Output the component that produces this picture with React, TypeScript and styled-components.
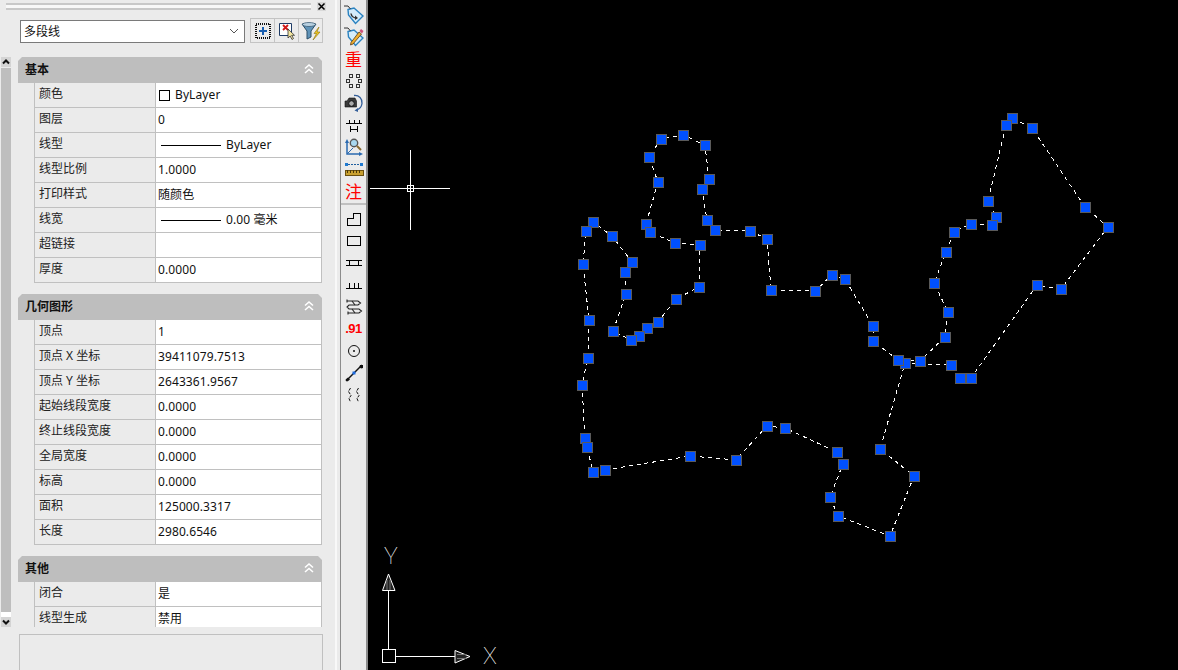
import React from 'react';
import styled, { createGlobalStyle } from 'styled-components';

const GlobalStyle = createGlobalStyle`
  html, body {
    margin: 0;
    padding: 0;
    background: #000;
  }
  * {
    box-sizing: border-box;
  }
`;

const Screen = styled.div`
  display: flex;
  width: 1178px;
  height: 670px;
  overflow: hidden;
  font-family: 'Noto Sans', 'Noto Sans CJK SC', sans-serif;
  font-size: 12px;
  color: #111;
  background: #000;
`;

const Panel = styled.div`
  width: 335px;
  height: 670px;
  flex: none;
  display: flex;
  flex-direction: column;
  background: #ebebeb;
`;

const Splitter = styled.div`
  width: 5px;
  flex: none;
  background: linear-gradient(to right, #f8f8f8 0 2px, #ebebeb 2px);
`;

const TitleBar = styled.div`
  height: 11px;
  margin-top: 1px;
  padding-left: 6px;
  display: flex;
  align-items: center;
  gap: 6px;
`;

const Grip = styled.div`
  width: 305px;
  height: 7px;
  border-top: 2px solid #c8c8c8;
  border-bottom: 2px solid #c8c8c8;
  background: #f8f8f8;
`;

const CloseButton = styled.div`
  width: 9px;
  height: 9px;
  display: flex;
  background: #d8d8d8;
`;

const SelectorRow = styled.div`
  height: 25px;
  margin-top: 6px;
  padding-left: 20px;
  display: flex;
  align-items: center;
`;

const Combo = styled.div`
  width: 225px;
  height: 23px;
  margin-top: 1px;
  padding: 0 5px 0 3px;
  display: flex;
  align-items: center;
  justify-content: space-between;
  background: #fff;
  border: 1px solid #7a7a7a;
`;

const ToolButtons = styled.div`
  display: flex;
  margin-left: 5px;
`;

const ToolButton = styled.div`
  width: 25px;
  height: 25px;
  display: flex;
  align-items: center;
  justify-content: center;
  border: 1px solid #c4c4c4;
  margin-left: -1px;
  &:first-child {
    margin-left: 0;
  }
`;

const PropsArea = styled.div`
  height: 570px;
  margin-top: 14px;
  padding-left: 1px;
  display: flex;
  overflow: hidden;
`;

const ScrollBar = styled.div`
  width: 10px;
  flex: none;
  display: flex;
  flex-direction: column;
`;

const ScrollEnd = styled.div`
  height: 10px;
  display: flex;
  align-items: center;
  justify-content: center;
  background: #d4d4d4;
`;

const ScrollThumb = styled.div`
  flex: 1;
  margin-top: 1px;
  background: #bebebe;
`;

const ScrollGap = styled.div`
  height: 5px;
  background: #fff;
`;

const Sections = styled.div`
  width: 304px;
  margin-left: 7px;
  display: flex;
  flex-direction: column;
  gap: 11px;
`;

const SectionHeader = styled.div`
  height: 26px;
  padding: 0 7px 3px;
  display: flex;
  align-items: center;
  justify-content: space-between;
  font-weight: 700;
  color: #111;
  background: #bebebe;
  clip-path: polygon(4px 0, calc(100% - 4px) 0, 100% 4px, 100% 100%, 0 100%, 0 4px);
`;

const Row = styled.div`
  height: 25px;
  width: 288px;
  margin-left: 16px;
  display: flex;
  border-left: 1px solid #c0c0c0;
  border-right: 1px solid #c0c0c0;
  border-bottom: 1px solid #c0c0c0;
`;

const Label = styled.div`
  width: 121px;
  flex: none;
  padding: 0 0 4px 4px;
  display: flex;
  align-items: center;
  color: #222;
  border-right: 1px solid #c0c0c0;
`;

const Value = styled.div`
  flex: 1;
  padding: 0 0 2px 2px;
  display: flex;
  align-items: center;
  letter-spacing: 0.1px;
  background: #fff;
`;

const Swatch = styled.span`
  width: 11px;
  height: 11px;
  margin: 2px 5px 0 1px;
  border: 1px solid #000;
`;

const LineSample = styled.span`
  width: 60px;
  height: 1px;
  margin: 2px 5px 0 3px;
  background: #000;
`;

const Description = styled.div`
  height: 36px;
  width: 304px;
  margin: 7px 0 0 19px;
  border: 1px solid #c0c0c0;
  border-bottom: 0;
`;

const Toolbar = styled.div`
  width: 28px;
  flex: none;
  display: flex;
  flex-direction: column;
  background: #ebebeb;
  border-left: 1px solid #8c8c8c;
  border-right: 2px solid #8c8c8c;
`;

const ToolGroup = styled.div`
  display: flex;
  flex-direction: column;
  padding-top: ${({ $top }: { $top: number }) => $top}px;
  & + & {
    border-top: 2px solid #c0c0c0;
    margin-top: 1px;
  }
`;

const ToolIcon = styled.div`
  height: 22px;
  display: flex;
  align-items: center;
  justify-content: center;
`;

const RedGlyph = styled.span`
  font-family: 'Noto Sans CJK SC', sans-serif;
  font-size: 17px;
  line-height: 22px;
  color: #f00;
`;

const RedNumber = styled.span`
  font-family: 'Liberation Sans', sans-serif;
  font-size: 13px;
  font-weight: 700;
  line-height: 22px;
  letter-spacing: -0.5px;
  color: #f00;
`;

const Canvas = styled.div`
  flex: 1;
  background: #000;
`;

const Drawing = styled.svg`
  display: block;
  width: 100%;
  height: 100%;
`;

const AxisLetter = styled.text`
  font-family: Roboto, 'DejaVu Sans', sans-serif;
  font-size: 23px;
  font-weight: 100;
  fill: #fff;
`;

type Prop = { label: string; value: React.ReactNode };

const basic: Prop[] = [
  { label: '颜色', value: <><Swatch />ByLayer</> },
  { label: '图层', value: '0' },
  { label: '线型', value: <><LineSample />ByLayer</> },
  { label: '线型比例', value: '1.0000' },
  { label: '打印样式', value: '随颜色' },
  { label: '线宽', value: <><LineSample />0.00 毫米</> },
  { label: '超链接', value: '' },
  { label: '厚度', value: '0.0000' },
];

const geometry: Prop[] = [
  { label: '顶点', value: '1' },
  { label: '顶点 X 坐标', value: '39411079.7513' },
  { label: '顶点 Y 坐标', value: '2643361.9567' },
  { label: '起始线段宽度', value: '0.0000' },
  { label: '终止线段宽度', value: '0.0000' },
  { label: '全局宽度', value: '0.0000' },
  { label: '标高', value: '0.0000' },
  { label: '面积', value: '125000.3317' },
  { label: '长度', value: '2980.6546' },
];

const misc: Prop[] = [
  { label: '闭合', value: '是' },
  { label: '线型生成', value: '禁用' },
];

const vertices: [number, number][] = [
  [605, 470], [690, 456], [736, 460], [767, 426], [785, 428], [837, 452], [843, 464], [830, 497], [838, 516],
  [890, 536], [914, 476], [880, 449], [905, 363], [951, 365], [960, 378], [971, 378], [1037, 285], [1061, 289],
  [1108, 227], [1085, 207], [1032, 128], [1012, 118], [1006, 125], [988, 201], [996, 217], [992, 225], [971, 224],
  [954, 232], [946, 252], [934, 283], [948, 312], [945, 337], [920, 361], [898, 360], [873, 341], [873, 326],
  [845, 279], [832, 275], [815, 291], [771, 290], [767, 239], [750, 231], [715, 230], [707, 220], [702, 189],
  [709, 179], [705, 145], [683, 135], [661, 139], [649, 157], [658, 182], [646, 224], [650, 232], [675, 243],
  [700, 245], [699, 287], [676, 299], [658, 322], [647, 328], [639, 336], [631, 340], [613, 331], [626, 294],
  [625, 272], [632, 262], [612, 236], [593, 222], [586, 231], [583, 264], [589, 320], [588, 358], [582, 385],
  [585, 438], [587, 447], [593, 472],
];

const Chevrons = ({ color }: { color: string }) => (
  <svg width="12" height="12" viewBox="0 0 12 12" fill="none" stroke={color} strokeWidth="1.6">
    <path d="M2 5.500 6 2l4 3.500M2 10 6 6.500l4 3.500" />
  </svg>
);

const ScrollArrow = ({ down }: { down?: boolean }) => (
  <svg width="8" height="6" viewBox="0 0 8 6" fill="none" stroke="#111" strokeWidth="2">
    <path d={down ? 'M1 1.500 4 4.500 7 1.500' : 'M1 4.500 4 1.500 7 4.500'} />
  </svg>
);

const QuickSelectIcon = () => (
  <svg width="18" height="18" viewBox="0 0 18 18" fill="none" shapeRendering="crispEdges">
    <rect x="2" y="2" width="14" height="14" stroke="#111" strokeWidth="2" strokeDasharray="1 1" />
    <path d="M9 5v8M5 9h8" stroke="#1a5fb0" strokeWidth="2.500" />
  </svg>
);

const PickIcon = () => (
  <svg width="20" height="20" viewBox="0 0 20 20" fill="none">
    <path d="M2.500 2.500h12v12h-12z" fill="#fff" stroke="#1f3c66" />
    <path d="M6 4l5 5M11 4 6 9" stroke="#d01818" strokeWidth="1.800" />
    <path d="M11 8v9l2.200-2 1.800 3.500 1.500-1-1.800-3.200h2.800z" fill="#f3e6a0" stroke="#333" strokeWidth="0.800" />
  </svg>
);

const FilterIcon = () => (
  <svg width="20" height="20" viewBox="0 0 20 20" fill="none">
    <path d="M1 3h14L10 10v6l-4 2V10z" fill="#5f93b8" stroke="#2c4f68" />
    <ellipse cx="8" cy="3.500" rx="6.500" ry="2" fill="#b8d0e0" stroke="#2c4f68" strokeWidth="0.700" />
    <path d="M18 6l-5 6.500h2.500L12 19l7-8h-3z" fill="#f0c820" stroke="#8a7010" strokeWidth="0.600" />
  </svg>
);

const TagShape = () => (
  <path d="M4 4.500 10 3l9 8-7.500 7.500L4.500 10z" fill="#d4ecfa" stroke="#2a82c0" strokeWidth="1.400" />
);

const TagArrowIcon = () => (
  <svg width="20" height="20" viewBox="0 0 20 20" fill="none">
    <TagShape />
    <path d="M0 1h4l2.500 3" stroke="#333" />
    <path d="M7 8.500c.5 3 2.500 4.500 6 4.500" stroke="#333" strokeWidth="1.500" />
    <path d="M11 10.500l3 2.500-3 2z" fill="#333" />
  </svg>
);

const TagPencilIcon = () => (
  <svg width="20" height="20" viewBox="0 0 20 20" fill="none">
    <TagShape />
    <path d="M0 1h4l2.500 3" stroke="#333" />
    <path d="M7 15.500 15 5l2.500 2L9 17l-2.500 1z" fill="#f0b030" stroke="#5a3a10" strokeWidth="0.800" />
    <path d="M15.500 4l1.500-2 2.500 2-1.500 2.500z" fill="#d0507a" />
  </svg>
);

const GridPointsIcon = () => (
  <svg width="18" height="18" viewBox="0 0 18 18" fill="none" stroke="#333" strokeWidth="1" shapeRendering="crispEdges">
    <rect x="4.500" y="2.500" width="3" height="3" />
    <rect x="11.500" y="2.500" width="3" height="3" />
    <rect x="1.500" y="7.500" width="3" height="3" />
    <rect x="13.500" y="7.500" width="3" height="3" />
    <rect x="4.500" y="12.500" width="3" height="3" />
    <rect x="11.500" y="12.500" width="3" height="3" />
  </svg>
);

const OrbitCameraIcon = () => (
  <svg width="20" height="20" viewBox="0 0 20 20" fill="none">
    <path d="M1 8h2l2-3h6l1.500 3v6H1z" fill="#3a3a3a" stroke="#111" strokeWidth="0.600" />
    <circle cx="7.500" cy="10.500" r="2.800" fill="#aaa" stroke="#111" />
    <path d="M10 2.500c5-.5 8.500 3 8 8-.4 3-2.500 5.500-5.500 6.500" stroke="#345f9a" strokeWidth="1.300" />
    <path d="M14 15l-3.500 2.500 3.500 1.500z" fill="#345f9a" />
  </svg>
);

const TickLevelIcon = () => (
  <svg width="18" height="18" viewBox="0 0 18 18" fill="none" stroke="#000" shapeRendering="crispEdges">
    <path d="M1 7.500h16M4.500 4v3M9.500 4v3M14.500 4v3" />
    <path d="M5 10v6M12 10v6M5 13h7" />
  </svg>
);

const AxesZoomIcon = () => (
  <svg width="20" height="20" viewBox="0 0 20 20" fill="none">
    <path d="M3 4v13h14" stroke="#2a6ab0" strokeWidth="1.500" />
    <path d="M1 6l2-4 2 4zM15 15l4 2-4 2z" fill="#2a6ab0" />
    <path d="M3 17 9 11" stroke="#2a6ab0" />
    <circle cx="10" cy="6" r="3.700" fill="#a8d8f0" stroke="#555" strokeWidth="1.400" />
    <path d="M13 9l4 4" stroke="#8a6a30" strokeWidth="2" />
  </svg>
);

const RulerIcon = () => (
  <svg width="20" height="20" viewBox="0 0 20 20" fill="none" shapeRendering="crispEdges">
    <rect x="1" y="4" width="3" height="3" fill="#1f7ad0" />
    <rect x="16" y="4" width="3" height="3" fill="#1f7ad0" />
    <path d="M4 5.500h12" stroke="#1f5fa0" strokeDasharray="2 1" />
    <rect x="1" y="11" width="18" height="5" fill="#c8a030" stroke="#6a5010" />
    <path d="M3.500 11v2.500M6.500 11v2.500M9.500 11v2.500M12.500 11v2.500M15.500 11v2.500" stroke="#4a3808" />
  </svg>
);

const StepIcon = () => (
  <svg width="18" height="18" viewBox="0 0 18 18" fill="none" stroke="#000" shapeRendering="crispEdges">
    <path d="M2.500 8.500h6v-5h7v12h-13z" />
  </svg>
);

const RectIcon = () => (
  <svg width="18" height="18" viewBox="0 0 18 18" fill="none" stroke="#000" shapeRendering="crispEdges">
    <rect x="2.500" y="4.500" width="13" height="9" />
  </svg>
);

const LadderIcon = () => (
  <svg width="18" height="18" viewBox="0 0 18 18" fill="none" stroke="#000" shapeRendering="crispEdges">
    <path d="M1 6.500h16M1 11.500h16M4.500 6.500v5M13.500 6.500v5" />
  </svg>
);

const CombIcon = () => (
  <svg width="18" height="18" viewBox="0 0 18 18" fill="none" stroke="#000" shapeRendering="crispEdges">
    <path d="M1 12.500h16M4.500 7v5M9.500 7v5M13.500 7v5" />
  </svg>
);

const RoutedIcon = () => (
  <svg width="18" height="18" viewBox="0 0 18 18" fill="none" stroke="#222" strokeWidth="1.100">
    <path d="M2 3h11l2.500 2-2.500 2H4L2 9l2 2h10l2.500 2-2.500 2H3" />
    <path d="M2 1.500v3M7 3l3 4M7 11l3 4M3 13.500v3" />
  </svg>
);

const CircleDotIcon = () => (
  <svg width="18" height="18" viewBox="0 0 18 18" fill="none" stroke="#111">
    <circle cx="9" cy="9" r="5.500" />
    <circle cx="9" cy="9" r="1" fill="#111" stroke="none" />
  </svg>
);

const MidpointIcon = () => (
  <svg width="20" height="20" viewBox="0 0 20 20" fill="none">
    <path d="M2 18 18 2" stroke="#111" strokeWidth="1.500" />
    <path d="M1.500 16.500l2 2 2.500-2-2-2zM16 2h3v3l-2 .5-1.500-1.500z" fill="#111" />
    <rect x="8.500" y="8.500" width="3" height="3" fill="#1a6ae0" />
  </svg>
);

const BreakIcon = () => (
  <svg width="18" height="18" viewBox="0 0 18 18" fill="none" stroke="#111">
    <path d="M5.500 2 3.500 5.500 6 9.500 4 12.500l1.500 3.500M13.500 2l-2 3.500 2.500 4-2 3 1.500 3.500" strokeDasharray="3 1" />
  </svg>
);

const PropSection = ({ title, rows }: { title: string; rows: Prop[] }) => (
  <section>
    <SectionHeader>
      {title}
      <Chevrons color="#fff" />
    </SectionHeader>
    {rows.map((row) => (
      <Row key={row.label}>
        <Label>{row.label}</Label>
        <Value>{row.value}</Value>
      </Row>
    ))}
  </section>
);

const PolylineDrawing = () => (
  <Drawing viewBox="368 0 810 670">
    <polygon
      points={vertices.map((v) => v.join(',')).join(' ')}
      fill="none"
      stroke="#fff"
      strokeDasharray="4 4"
      shapeRendering="crispEdges"
    />
    {vertices.map(([x, y]) => (
      <rect
        key={`${x}-${y}`}
        x={x - 5}
        y={y - 5}
        width="10"
        height="10"
        fill="#0050ff"
        stroke="#5a5a5a"
        shapeRendering="crispEdges"
      />
    ))}
    <g stroke="#fff" fill="none" shapeRendering="crispEdges">
      <path d="M370 188.500h80M410.500 150v80" />
      <rect x="407.500" y="185.500" width="6" height="6" />
      <rect x="382.500" y="649.500" width="13" height="13" />
      <path d="M388.500 590v59M396 656.500h59" />
    </g>
    <g stroke="#fff" fill="#222">
      <path d="M388.500 574 382.500 590.500h12.500z" />
      <path d="M470 656.500 455 650.500v12.500z" />
    </g>
    <path d="M387 580v10M390 580v10M457 654.500h9M457 658.500h9" stroke="#777" fill="none" />
    <AxisLetter x="384" y="564">Y</AxisLetter>
    <AxisLetter x="483" y="664">X</AxisLetter>
  </Drawing>
);

const App = () => (
  <Screen>
    <GlobalStyle />
    <Panel>
      <TitleBar>
        <Grip />
        <CloseButton>
          <svg width="9" height="9" viewBox="0 0 9 9" stroke="#000" strokeWidth="1.500">
            <path d="M1.500 1.500l6 6M7.500 1.500l-6 6" />
          </svg>
        </CloseButton>
      </TitleBar>
      <SelectorRow>
        <Combo>
          多段线
          <svg width="10" height="6" viewBox="0 0 10 6" fill="none" stroke="#555">
            <path d="M1 1l4 4 4-4" />
          </svg>
        </Combo>
        <ToolButtons>
          <ToolButton><QuickSelectIcon /></ToolButton>
          <ToolButton><PickIcon /></ToolButton>
          <ToolButton><FilterIcon /></ToolButton>
        </ToolButtons>
      </SelectorRow>
      <PropsArea>
        <ScrollBar>
          <ScrollEnd><ScrollArrow /></ScrollEnd>
          <ScrollThumb />
          <ScrollGap />
          <ScrollEnd><ScrollArrow down /></ScrollEnd>
        </ScrollBar>
        <Sections>
          <PropSection title="基本" rows={basic} />
          <PropSection title="几何图形" rows={geometry} />
          <PropSection title="其他" rows={misc} />
        </Sections>
      </PropsArea>
      <Description />
    </Panel>
    <Splitter />
    <Toolbar>
      <ToolGroup $top={4}>
        <ToolIcon><TagArrowIcon /></ToolIcon>
        <ToolIcon><TagPencilIcon /></ToolIcon>
        <ToolIcon><RedGlyph>重</RedGlyph></ToolIcon>
        <ToolIcon><GridPointsIcon /></ToolIcon>
        <ToolIcon><OrbitCameraIcon /></ToolIcon>
        <ToolIcon><TickLevelIcon /></ToolIcon>
        <ToolIcon><AxesZoomIcon /></ToolIcon>
        <ToolIcon><RulerIcon /></ToolIcon>
        <ToolIcon><RedGlyph>注</RedGlyph></ToolIcon>
      </ToolGroup>
      <ToolGroup $top={3}>
        <ToolIcon><StepIcon /></ToolIcon>
        <ToolIcon><RectIcon /></ToolIcon>
        <ToolIcon><LadderIcon /></ToolIcon>
        <ToolIcon><CombIcon /></ToolIcon>
        <ToolIcon><RoutedIcon /></ToolIcon>
        <ToolIcon><RedNumber>.91</RedNumber></ToolIcon>
        <ToolIcon><CircleDotIcon /></ToolIcon>
        <ToolIcon><MidpointIcon /></ToolIcon>
        <ToolIcon><BreakIcon /></ToolIcon>
      </ToolGroup>
    </Toolbar>
    <Canvas>
      <PolylineDrawing />
    </Canvas>
  </Screen>
);

export default App;
